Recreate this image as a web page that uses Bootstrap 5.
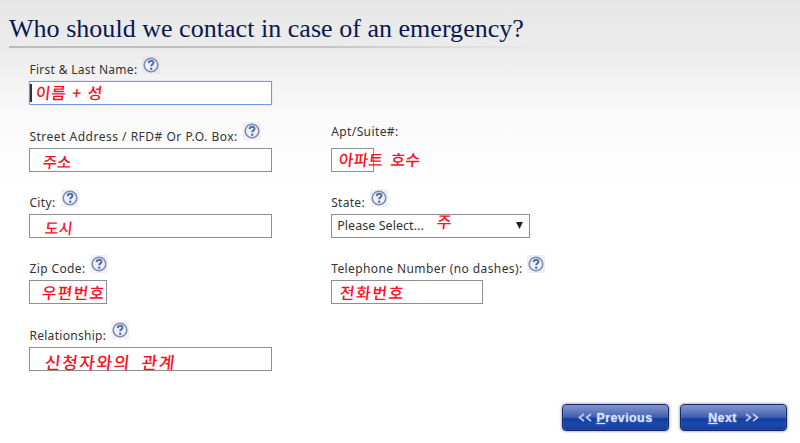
<!DOCTYPE html>
<html lang="en">
<head>
<meta charset="utf-8">
<meta name="viewport" content="width=device-width, initial-scale=1">
<title>Emergency contact</title>
<link href="https://cdn.jsdelivr.net/npm/bootstrap@5.3.0/dist/css/bootstrap.min.css" rel="stylesheet">
<style>
body{width:800px;height:443px;overflow:hidden;font-family:"Noto Sans","Open Sans",sans-serif;color:#333;background:linear-gradient(#e6e6e6 0,#e9e9e9 20px,#ececec 50px,#f5f5f5 90px,#fbfbfb 125px,#fdfdfd 170px,#fff 190px)}
.page-title{height:48px;width:516px;margin-left:9px;padding-top:13px;position:relative;font:400 26px/32px "Liberation Serif",serif;letter-spacing:.03px;color:#0b1750;white-space:nowrap}
.page-title::after{content:"";position:absolute;left:0;bottom:0;width:100%;height:2px;background:linear-gradient(90deg,#bcbcbc 0,#c4c4c4 60%,#e9e9e9)}
.form-area{margin-left:29.4px;padding-top:7.4px}
.cell{height:66.3px;width:301.8px}
.caption-line{height:26px}
.caption-line label{font-size:12px;line-height:16px;letter-spacing:.4px;white-space:nowrap;margin-top:7px}
.caption-line .no-help{margin-top:2.6px}
.caption-line .ls-s{letter-spacing:.3px}
.caption-line .ls-l{letter-spacing:.5px}
.help{width:18px;height:18px;margin:.6px 0 0 4.8px;background:rgba(222,222,228,.4);flex:none}
.help svg{display:block}
.box{height:24px;border:1px solid #8e8e8e;background:#fff}
.w-full{width:243px}.w-apt{width:43px}.w-zip{width:78px}.w-tel{width:152px}.w-state{width:199px}
.w-state{padding:0 6px 0 5px;font-size:12.5px;letter-spacing:.05px}
.box.active{border:1.5px solid #6e9be0;border-radius:1px;box-shadow:0 0 1px #6e9be0}
.caret{position:absolute;left:0;top:2px;width:2px;height:18px;background:#333}
.ink{position:absolute;font:500 16px/20px "Noto Sans CJK KR",sans-serif;color:#fb0f23;white-space:nowrap;transform:skewX(-6deg);z-index:2}
#k1{left:6px;top:0;letter-spacing:.4px;word-spacing:2px}
#k2{left:13px;top:2px;font-size:15.5px}
#k3{left:7px;top:0;word-spacing:4px}
#k4{left:15px;top:3px;font-size:15px}
#k5{left:105px;top:-4px}
#k6{left:12px;top:1px;letter-spacing:1.1px}
#k7{left:8px;top:1px;letter-spacing:1.5px}
#k8{left:15px;top:4px;font-size:17px;letter-spacing:1.6px;word-spacing:5px}
.actions{margin:17.6px 13px 0 0;gap:11px}
.nav-btn{width:107px;height:27px;border:1px solid #15286f;border-radius:4px;background:linear-gradient(#8394cb 0,#5c76bd 30%,#3558ac 52%,#163f9e 54%,#1b48ab 80%,#153896);box-shadow:0 0 3px #777,inset 0 0 1px #aab8e5;color:#dbe5ff;font:700 12.5px/16px "Liberation Sans",sans-serif;letter-spacing:.4px;text-shadow:0 0 2px #8eaaf0}
.nav-btn svg{flex:none}
</style>
<script src="https://cdn.jsdelivr.net/npm/bootstrap@5.3.0/dist/js/bootstrap.bundle.min.js"></script>
</head>
<body>
<svg class="d-none"><symbol id="q" viewBox="0 0 18 18"><circle cx="9" cy="9" r="6.8" fill="#eef1f7" stroke="#7b8cba" stroke-width="1.6"/><path d="M6.7 7.2Q7 4.8 9.2 4.8Q11.6 4.9 11.5 6.8C11.4 8.3 9.2 8.5 9.2 10.3" fill="none" stroke="#5d70a5" stroke-width="2.1"/><circle cx="9.2" cy="12.7" r="1.25" fill="#5d70a5"/></symbol></svg>
<h1 class="page-title mb-0">Who should we contact in case of an emergency?</h1>
<main class="form-area">
 <div class="d-flex"><div class="cell"><div class="caption-line d-flex"><label class="ls-s">First &amp; Last Name:</label><span class="help"><svg width="18" height="18"><use href="#q"/></svg></span></div><div class="box active w-full position-relative"><i class="caret"></i><span class="ink" id="k1">이름 + 성</span></div></div></div>
 <div class="d-flex"><div class="cell"><div class="caption-line d-flex"><label class="ls-l">Street Address / RFD# Or P.O. Box:</label><span class="help"><svg width="18" height="18"><use href="#q"/></svg></span></div><div class="box w-full position-relative"><span class="ink" id="k2">주소</span></div></div>
 <div class="cell"><div class="caption-line d-flex"><label class="no-help">Apt/Suite#:</label></div><div class="box w-apt position-relative"><span class="ink" id="k3">아파트 호수</span></div></div></div>
 <div class="d-flex"><div class="cell"><div class="caption-line d-flex"><label>City:</label><span class="help"><svg width="18" height="18"><use href="#q"/></svg></span></div><div class="box w-full position-relative"><span class="ink" id="k4">도시</span></div></div>
 <div class="cell"><div class="caption-line d-flex"><label class="ls-s">State:</label><span class="help"><svg width="18" height="18"><use href="#q"/></svg></span></div><div class="box w-state position-relative d-flex align-items-center justify-content-between"><span>Please Select...</span><svg width="7" height="7"><path d="M0 0H7L3.5 7Z" fill="#222"/></svg><span class="ink" id="k5">주</span></div></div></div>
 <div class="d-flex"><div class="cell"><div class="caption-line d-flex"><label>Zip Code:</label><span class="help"><svg width="18" height="18"><use href="#q"/></svg></span></div><div class="box w-zip position-relative"><span class="ink" id="k6">우편번호</span></div></div>
 <div class="cell"><div class="caption-line d-flex"><label>Telephone Number (no dashes):</label><span class="help"><svg width="18" height="18"><use href="#q"/></svg></span></div><div class="box w-tel position-relative"><span class="ink" id="k7">전화번호</span></div></div></div>
 <div class="d-flex"><div class="cell"><div class="caption-line d-flex"><label class="ls-s">Relationship:</label><span class="help"><svg width="18" height="18"><use href="#q"/></svg></span></div><div class="box w-full position-relative"><span class="ink" id="k8">신청자와의 관계</span></div></div></div>
</main>
<div class="actions d-flex justify-content-end">
 <button class="nav-btn d-flex align-items-center justify-content-center p-0"><svg width="14" height="9" class="me-1"><path d="M6 1L1.5 4.5L6 8M13 1L8.5 4.5L13 8" fill="none" stroke="#b9c9f4" stroke-width="1.8"/></svg><span><u>P</u>revious</span></button>
 <button class="nav-btn d-flex align-items-center justify-content-center p-0"><span><u>N</u>ext</span><svg width="14" height="9" class="ms-2"><path d="M1 1L5.5 4.5L1 8M8 1L12.5 4.5L8 8" fill="none" stroke="#b9c9f4" stroke-width="1.8"/></svg></button>
</div>
</body>
</html>
